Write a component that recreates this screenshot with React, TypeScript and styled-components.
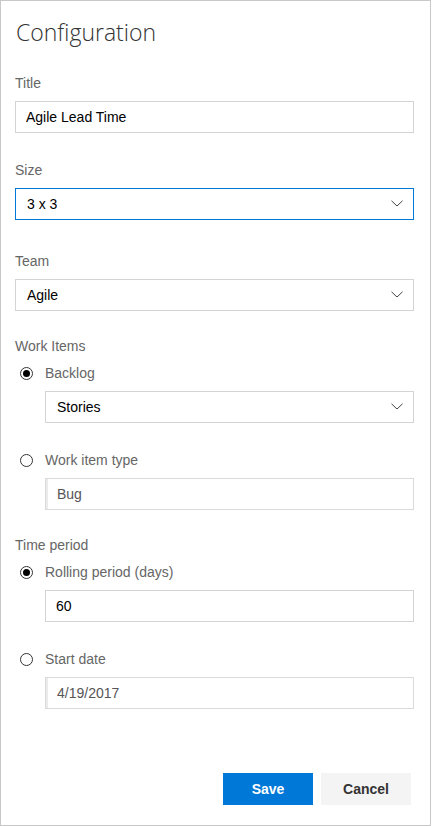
import React from 'react';
import styled, { createGlobalStyle, css } from 'styled-components';

const GlobalStyle = createGlobalStyle`
  html, body {
    margin: 0;
    padding: 0;
    background: #ffffff;
  }
  body {
    font-family: "Segoe UI", "Liberation Sans", Arial, sans-serif;
    color: #333333;
  }
  * {
    box-sizing: border-box;
  }
`;

const Panel = styled.div`
  width: 431px;
  height: 826px;
  border: 1px solid #c8c8c8;
  padding: 0 16px 20px 14px;
  display: flex;
  flex-direction: column;
`;

const Heading = styled.h1`
  margin: 13px 0 0 1px;
  font-family: "Open Sans", "Segoe UI", sans-serif;
  font-weight: 300;
  font-size: 23px;
  line-height: 36px;
  color: #333333;
`;

const Section = styled.div<{ $top: number }>`
  display: flex;
  flex-direction: column;
  margin-top: ${(p) => p.$top}px;
`;

const Label = styled.div`
  font-size: 14px;
  line-height: 20px;
  color: #666666;
  margin-bottom: 8px;
`;

const GroupLabel = styled(Label)`
  margin-bottom: 7px;
`;

const boxBase = css`
  height: 32px;
  border: 1px solid #d4d4d4;
  background: #ffffff;
  display: flex;
  align-items: center;
  font-size: 14px;
  color: #000000;
`;

const TextBox = styled.div<{ $disabled?: boolean }>`
  ${boxBase}
  padding-left: 10px;
  ${(p) =>
    p.$disabled &&
    css`
      color: #555555;
      border-color: #dadada;
      box-shadow: inset 2px 0 0 #ebebeb;
      padding-left: 11px;
    `}
`;

const SelectBox = styled.div<{ $focused?: boolean }>`
  ${boxBase}
  justify-content: space-between;
  padding: 0 10px 0 11px;
  ${(p) =>
    p.$focused &&
    css`
      border-color: #0078d7;
    `}
`;

const Chevron = styled.svg`
  width: 12px;
  height: 7px;
  flex: none;
  margin-top: -1px;
`;

const Indented = styled.div`
  margin-left: 30px;
  margin-top: 8px;
`;

const RadioRow = styled.div<{ $top?: number }>`
  display: flex;
  align-items: center;
  height: 20px;
  margin-top: ${(p) => p.$top ?? 0}px;
`;

const RadioCircle = styled.span<{ $checked?: boolean }>`
  width: 13px;
  height: 13px;
  border-radius: 50%;
  border: 1px solid #333333;
  margin-left: 5px;
  margin-right: 12px;
  display: flex;
  align-items: center;
  justify-content: center;
  flex: none;

  &::after {
    content: '';
    width: 7px;
    height: 7px;
    border-radius: 50%;
    background: ${(p) => (p.$checked ? '#000000' : 'transparent')};
  }
`;

const RadioText = styled.span`
  font-size: 14px;
  color: #666666;
`;

const Actions = styled.div`
  margin-top: auto;
  display: flex;
  justify-content: flex-end;
  gap: 8px;
  padding-right: 3px;
`;

const Button = styled.button<{ $primary?: boolean }>`
  width: 90px;
  height: 32px;
  border: none;
  font-family: inherit;
  font-size: 14px;
  font-weight: 700;
  cursor: pointer;
  background: ${(p) => (p.$primary ? '#0078d7' : '#f4f4f4')};
  color: ${(p) => (p.$primary ? '#ffffff' : '#333333')};
`;

const ChevronIcon = () => (
  <Chevron viewBox="0 0 12 7">
    <path d="M0.5 0.8 L6 6 L11.5 0.8" fill="none" stroke="#444444" strokeWidth="1" />
  </Chevron>
);

const Select = ({ value, focused }: { value: string; focused?: boolean }) => (
  <SelectBox $focused={focused}>
    <span>{value}</span>
    <ChevronIcon />
  </SelectBox>
);

const Radio = ({ label, checked, top }: { label: string; checked?: boolean; top?: number }) => (
  <RadioRow $top={top}>
    <RadioCircle $checked={checked} />
    <RadioText>{label}</RadioText>
  </RadioRow>
);

export default function App() {
  return (
    <>
      <GlobalStyle />
      <Panel>
        <Heading>Configuration</Heading>

        <Section $top={23}>
          <Label>Title</Label>
          <TextBox>Agile Lead Time</TextBox>
        </Section>

        <Section $top={27}>
          <Label>Size</Label>
          <Select value="3 x 3" focused />
        </Section>

        <Section $top={31}>
          <Label>Team</Label>
          <Select value="Agile" />
        </Section>

        <Section $top={25}>
          <GroupLabel>Work Items</GroupLabel>
          <Radio label="Backlog" checked />
          <Indented>
            <Select value="Stories" />
          </Indented>
          <Radio label="Work item type" top={27} />
          <Indented>
            <TextBox $disabled>Bug</TextBox>
          </Indented>
        </Section>

        <Section $top={25}>
          <GroupLabel>Time period</GroupLabel>
          <Radio label="Rolling period (days)" checked />
          <Indented>
            <TextBox>60</TextBox>
          </Indented>
          <Radio label="Start date" top={27} />
          <Indented>
            <TextBox $disabled>4/19/2017</TextBox>
          </Indented>
        </Section>

        <Actions>
          <Button $primary>Save</Button>
          <Button>Cancel</Button>
        </Actions>
      </Panel>
    </>
  );
}
